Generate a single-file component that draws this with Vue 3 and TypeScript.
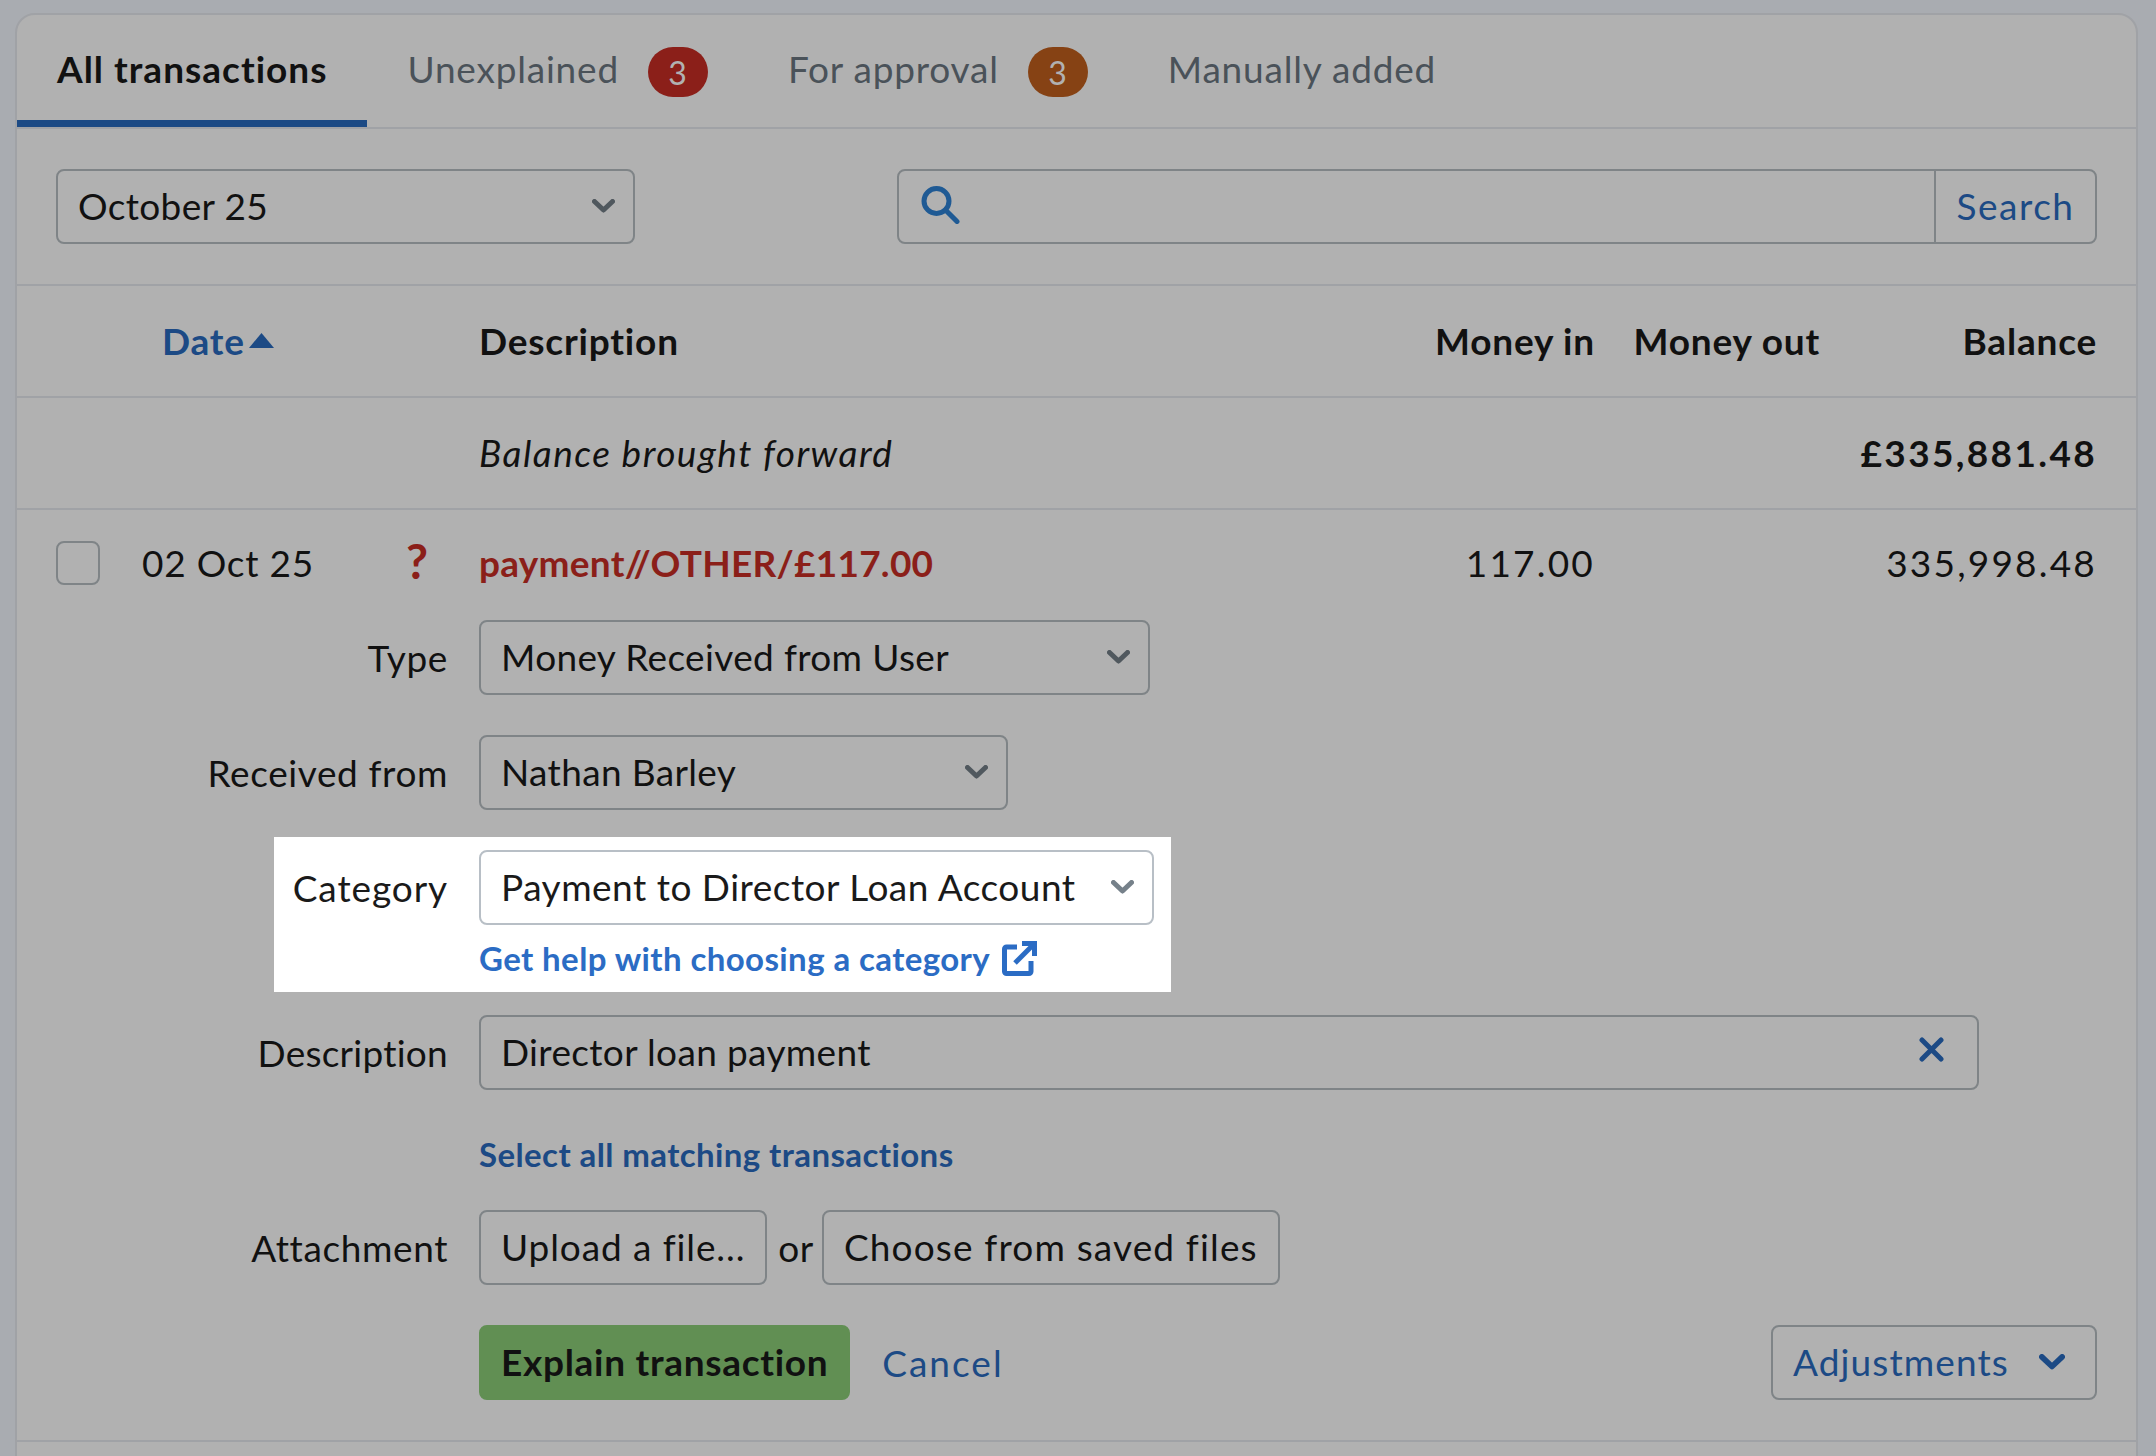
<script setup lang="ts">
import { ref } from "vue";

const tabs = ref([
  { label: "All transactions", active: true },
  { label: "Unexplained", count: 3, tone: "red" },
  { label: "For approval", count: 3, tone: "brown" },
  { label: "Manually added" },
]);
</script>

<template>
  <div class="page">
    <div class="card">
      <nav class="tabs">
        <a
          v-for="tab in tabs"
          :key="tab.label"
          class="tab"
          :class="{ active: tab.active }"
        >
          {{ tab.label }}
          <span v-if="tab.count" class="badge" :class="tab.tone">{{ tab.count }}</span>
        </a>
      </nav>

      <div class="filters">
        <div class="select month">
          <span>October 25</span>
          <svg class="chevron" viewBox="0 0 23 14">
            <path d="M2.5 2.5 11.5 11 20.5 2.5" />
          </svg>
        </div>
        <div class="search">
          <div class="search-field">
            <svg class="search-icon" viewBox="0 0 39 38">
              <circle cx="15.5" cy="15" r="12.5" />
              <path d="M24.5 24 36 35.5" />
            </svg>
          </div>
          <button class="search-btn">Search</button>
        </div>
      </div>

      <div class="table-row head">
        <div class="date-head">
          Date
          <svg class="sort" viewBox="0 0 25 15"><path d="M12.5 0 25 15H0Z" /></svg>
        </div>
        <div>Description</div>
        <div class="num">Money in</div>
        <div class="num">Money out</div>
        <div class="num">Balance</div>
      </div>

      <div class="table-row forward">
        <div></div>
        <div class="forward-label">Balance brought forward</div>
        <div></div>
        <div></div>
        <div class="num strong">£335,881.48</div>
      </div>

      <div class="transaction">
        <div class="table-row txn">
          <div class="txn-left">
            <span class="checkbox"></span>
            <span class="txn-date">02 Oct 25</span>
            <span class="question">?</span>
          </div>
          <div class="txn-desc">payment//OTHER/£117.00</div>
          <div class="num amount">117.00</div>
          <div></div>
          <div class="num amount">335,998.48</div>
        </div>

        <div class="form-row type-row">
          <label class="form-label">Type</label>
          <div class="select type">
            <span>Money Received from User</span>
            <svg class="chevron" viewBox="0 0 23 14">
              <path d="M2.5 2.5 11.5 11 20.5 2.5" />
            </svg>
          </div>
        </div>

        <div class="form-row from-row">
          <label class="form-label">Received from</label>
          <div class="select from">
            <span>Nathan Barley</span>
            <svg class="chevron" viewBox="0 0 23 14">
              <path d="M2.5 2.5 11.5 11 20.5 2.5" />
            </svg>
          </div>
        </div>

        <div class="highlight">
          <label class="form-label">Category</label>
          <div class="highlight-field">
            <div class="select category">
              <span>Payment to Director Loan Account</span>
              <svg class="chevron" viewBox="0 0 23 14">
                <path d="M2.5 2.5 11.5 11 20.5 2.5" />
              </svg>
            </div>
            <a class="help-link">
              Get help with choosing a category
              <svg class="external" viewBox="0 0 35 35">
                <path d="M15 6H4.5A2 2 0 0 0 2.5 8V30.500A2 2 0 0 0 4.500 32.500H27A2 2 0 0 0 29 30.500V20" />
                <path d="M13 22 31 4" />
                <path d="M20 2.500H32.500V15" />
              </svg>
            </a>
          </div>
        </div>

        <div class="form-row desc-row">
          <label class="form-label desc-label">Description</label>
          <div class="select description">
            <span>Director loan payment</span>
            <svg class="clear" viewBox="0 0 25 25">
              <path d="M3 3 22 22M22 3 3 22" />
            </svg>
          </div>
        </div>

        <a class="match-link">Select all matching transactions</a>

        <div class="form-row attach-row">
          <label class="form-label">Attachment</label>
          <button class="btn">Upload a file...</button>
          <span class="or">or</span>
          <button class="btn choose">Choose from saved files</button>
        </div>

        <div class="form-row actions">
          <span class="form-label"></span>
          <button class="btn primary">Explain transaction</button>
          <a class="cancel">Cancel</a>
          <button class="btn adjustments">
            Adjustments
            <svg class="chevron" viewBox="0 0 23 14">
              <path d="M2.500 2.500 11.500 11 20.500 2.500" />
            </svg>
          </button>
        </div>
      </div>
    </div>
  </div>
</template>

<style>
html,
body {
  margin: 0;
  background: #a9acb1;
}
</style>

<style scoped>
.page {
  height: 1456px;
  padding: 13px 18px 0 15px;
  box-sizing: border-box;
  overflow: hidden;
  font-family: Lato, "Liberation Sans", sans-serif;
  font-size: 37px;
  letter-spacing: 0.6px;
  color: #111;
}

.card {
  height: 1500px;
  box-sizing: border-box;
  background: #b1b1b1;
  border: 2px solid #a0a2a6;
  border-radius: 20px 20px 0 0;
}

/* tabs */
.tabs {
  display: flex;
  height: 112px;
  border-bottom: 2px solid #a0a2a6;
}

.tab {
  display: flex;
  align-items: center;
  gap: 29px;
  height: 97px;
  padding: 5px 40px 3px;
  color: #4a5259;
  letter-spacing: 0.8px;
  border-bottom: 7px solid transparent;
}

.tab.active {
  font-weight: 700;
  letter-spacing: 1px;
  color: #111;
  border-bottom-color: #1c4a85;
}

.badge {
  width: 60px;
  height: 50px;
  margin-top: 7px;
  border-radius: 25px;
  display: flex;
  align-items: center;
  justify-content: center;
  color: #b1b1b1;
  font-size: 32px;
}

.badge.red {
  background: #8b1f19;
}

.badge.brown {
  background: #864214;
}

/* filter row */
.filters {
  display: flex;
  justify-content: space-between;
  height: 157px;
  padding: 40px 39px 0 39px;
  box-sizing: border-box;
  border-bottom: 2px solid #a0a2a6;
}

.select {
  display: flex;
  align-items: center;
  justify-content: space-between;
  height: 75px;
  box-sizing: border-box;
  border: 2px solid #7f8487;
  border-radius: 8px;
  padding: 0 18px 2px 20px;
  letter-spacing: 0.35px;
}

.chevron {
  width: 23px;
  height: 14px;
  fill: none;
  stroke: #50585e;
  stroke-width: 5;
  stroke-linecap: round;
  stroke-linejoin: round;
}

.month {
  width: 579px;
}

.search {
  display: flex;
  width: 1200px;
  height: 75px;
  box-sizing: border-box;
  border: 2px solid #7f8487;
  border-radius: 8px;
}

.search-field {
  flex: 1;
  display: flex;
  align-items: center;
  padding-left: 22px;
}

.search-icon {
  width: 39px;
  height: 38px;
  margin-top: -4px;
  fill: none;
  stroke: #1f5a94;
  stroke-width: 5;
  stroke-linecap: round;
}

.search-btn {
  width: 161px;
  border: 0;
  border-left: 2px solid #7f8487;
  background: none;
  font: inherit;
  letter-spacing: 1.5px;
  color: #1c4a85;
  padding: 0 0 2px;
}

/* table */
.table-row {
  display: grid;
  grid-template-columns: 462px 1fr 160px 225px 277px;
  box-sizing: border-box;
  padding-right: 39px;
  align-items: center;
}

.head {
  height: 112px;
  padding-bottom: 2px;
  font-weight: 700;
  letter-spacing: 0.8px;
  border-bottom: 2px solid #a0a2a6;
}

.date-head {
  display: flex;
  align-items: center;
  gap: 4px;
  padding-left: 145px;
  color: #1c4a85;
}

.sort {
  width: 25px;
  height: 15px;
  fill: #1c4a85;
}

.num {
  text-align: right;
  white-space: nowrap;
}

.forward {
  height: 112px;
  padding-bottom: 2px;
  border-bottom: 2px solid #a0a2a6;
}

.forward-label {
  font-style: italic;
  letter-spacing: 1.5px;
}

.strong {
  font-weight: 700;
  letter-spacing: 2.35px;
}

/* expanded transaction */
.transaction {
  height: 932px;
  box-sizing: border-box;
  padding-top: 30px;
  border-bottom: 2px solid #a0a2a6;
}

.txn {
  height: 46px;
  line-height: 46px;
}

.amount {
  letter-spacing: 2.2px;
}

.txn-left {
  display: flex;
  align-items: center;
  height: 46px;
  padding-left: 39px;
}

.checkbox {
  width: 44px;
  height: 44px;
  box-sizing: border-box;
  border: 2px solid #7f8487;
  border-radius: 8px;
}

.txn-date {
  margin-left: 42px;
  width: 264px;
  letter-spacing: 0.75px;
}

.question {
  font-size: 48px;
  line-height: 46px;
  font-weight: 700;
  color: #8b1f19;
  margin-top: -4px;
}

.txn-desc {
  font-weight: 700;
  letter-spacing: 0.25px;
  color: #8b1f19;
}

.form-row {
  display: flex;
  align-items: center;
}

.form-label {
  width: 431px;
  margin-right: 31px;
  text-align: right;
  flex-shrink: 0;
}

.desc-label {
  letter-spacing: 0.25px;
}

.type-row {
  margin-top: 34px;
}

.type {
  width: 671px;
}

.from-row {
  margin-top: 40px;
}

.from {
  width: 529px;
}

.highlight {
  display: flex;
  width: 897px;
  height: 155px;
  box-sizing: border-box;
  margin: 27px 0 0 257px;
  padding-top: 13px;
  background: #fff;
  color: #1a1a1a;
}

.highlight .form-label {
  width: 174px;
  height: 75px;
  line-height: 75px;
  letter-spacing: 0.9px;
}

.category {
  width: 675px;
  letter-spacing: 0.5px;
  border-color: #b8bfc6;
}

.category .chevron {
  stroke: #76818a;
}

.help-link {
  display: flex;
  align-items: center;
  gap: 12px;
  margin-top: 13px;
  font-size: 33px;
  font-weight: 700;
  letter-spacing: 0.4px;
  color: #2b6cc4;
}

.external {
  width: 35px;
  height: 35px;
  fill: none;
  stroke: #2b6cc4;
  stroke-width: 5;
}

.desc-row {
  margin-top: 23px;
}

.description {
  width: 1500px;
}

.clear {
  width: 25px;
  height: 25px;
  margin: 0 15px 4px 0;
  fill: none;
  stroke: #1c4a85;
  stroke-width: 5;
  stroke-linecap: round;
}

.match-link {
  display: block;
  margin: 44px 0 0 462px;
  line-height: 40px;
  font-size: 33px;
  font-weight: 700;
  letter-spacing: 0.4px;
  color: #1c4a85;
}

.attach-row {
  margin-top: 36px;
}

.btn {
  height: 75px;
  box-sizing: border-box;
  border: 2px solid #7f8487;
  border-radius: 8px;
  background: none;
  font: inherit;
  letter-spacing: 0.9px;
  color: #111;
  padding: 0 20px 2px;
}

.choose {
  letter-spacing: 1.15px;
}

.or {
  margin: 0 8px 0 11px;
}

.actions {
  margin-top: 40px;
  padding-right: 39px;
}

.primary {
  background: #618f53;
  border-color: #618f53;
  font-weight: 700;
  letter-spacing: 0.7px;
}

.cancel {
  margin-left: 32px;
  letter-spacing: 2px;
  color: #1c4a85;
}

.adjustments {
  display: flex;
  align-items: center;
  gap: 30px;
  margin-left: auto;
  width: 326px;
  letter-spacing: 1.1px;
  color: #1c4a85;
  padding: 0 30px 2px 20px;
}

.adjustments .chevron {
  width: 26px;
  height: 16px;
  stroke: #1c4a85;
}
</style>
